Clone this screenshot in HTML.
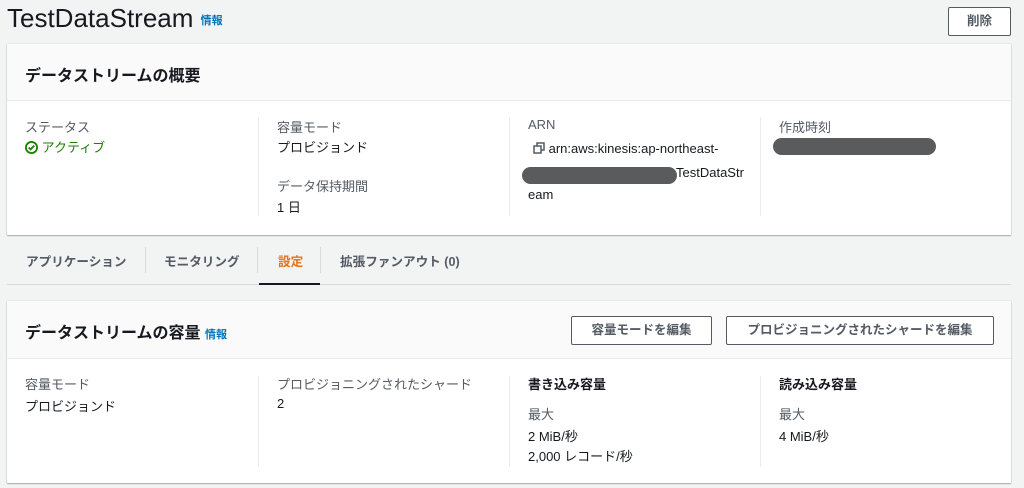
<!DOCTYPE html>
<html><head><meta charset="utf-8"><style>
*{margin:0;padding:0;box-sizing:border-box}
body{width:1024px;height:488px;background:#f2f3f3;font-family:"Liberation Sans","Noto Sans CJK JP",sans-serif;color:#16191f;position:relative;overflow:hidden;font-size:13px}
.abs{position:absolute}
.card{position:absolute;left:7px;width:1004px;background:#fff;box-shadow:0 1px 1px rgba(0,17,26,.3),0 0 1px rgba(0,17,26,.2)}
.hd{background:#fafafa;border-bottom:1px solid #eaeded;position:relative}
.lbl{color:#545b64;font-size:13px}
.val{font-size:13px;color:#16191f}
.div{position:absolute;width:1px;background:#eaeded}
.btn{position:absolute;border:1px solid #545b64;background:#fff;border-radius:2px;font-weight:bold;font-size:12.5px;color:#545b64;text-align:center;line-height:26px}
.info{color:#0073bb;font-size:11px;font-weight:bold}
.red{position:absolute;background:#5a5b5d;border-radius:9px;height:17px}
.tab{position:absolute;top:251px;font-size:12.6px;font-weight:bold;color:#545b64}
</style></head><body>
<div class="abs" style="left:7px;top:3px;font-size:26px;color:#16191f">TestDataStream <span class="info" style="vertical-align:3px">情報</span></div>
<div class="btn" style="left:948px;top:7px;width:63px;height:29px">削除</div>

<div class="card" style="top:44px;height:191px">
 <div class="hd" style="height:57px"><div class="abs" style="left:18px;top:18px;font-size:16px;font-weight:bold">データストリームの概要</div></div>
 <div class="abs lbl" style="left:18px;top:73px">ステータス</div>
 <div class="abs" style="left:18px;top:93px;color:#1d8102">
  <svg width="13" height="13" viewBox="0 0 14 14" style="vertical-align:-2px"><circle cx="7" cy="7" r="6" fill="none" stroke="#1d8102" stroke-width="2"/><path d="M4 7l2 2 4-4" fill="none" stroke="#1d8102" stroke-width="2"/></svg> アクティブ</div>
 <div class="div" style="left:251px;top:73px;height:99px"></div>
 <div class="abs lbl" style="left:270px;top:73px">容量モード</div>
 <div class="abs val" style="left:270px;top:93px">プロビジョンド</div>
 <div class="abs lbl" style="left:270px;top:132px">データ保持期間</div>
 <div class="abs val" style="left:270px;top:153px">1 日</div>
 <div class="div" style="left:502px;top:73px;height:99px"></div>
 <div class="abs lbl" style="left:521px;top:73px">ARN</div>
 <div class="abs val" style="left:526px;top:97px"><svg width="12" height="12" viewBox="0 0 12 12" style="vertical-align:-1px"><rect x="1" y="4" width="7" height="7" fill="none" stroke="#545b64" stroke-width="1.5"/><path d="M4 4V1h7v7H8" fill="none" stroke="#545b64" stroke-width="1.5"/></svg> arn:aws:kinesis:ap-northeast-</div>
 <div class="red" style="left:515px;top:123px;width:155px"></div>
 <div class="abs val" style="left:669px;top:121px">TestDataStr</div>
 <div class="abs val" style="left:521px;top:143px">eam</div>
 <div class="div" style="left:753px;top:73px;height:99px"></div>
 <div class="abs lbl" style="left:772px;top:73px">作成時刻</div>
 <div class="red" style="left:766px;top:94px;width:163px"></div>
</div>

<div class="tab" style="left:26px">アプリケーション</div>
<div class="abs" style="left:145px;top:247px;width:1px;height:26px;background:#d5dbdb"></div>
<div class="tab" style="left:164px">モニタリング</div>
<div class="abs" style="left:257px;top:247px;width:1px;height:26px;background:#d5dbdb"></div>
<div class="tab" style="left:278px;color:#ec7211">設定</div>
<div class="abs" style="left:320px;top:247px;width:1px;height:26px;background:#d5dbdb"></div>
<div class="tab" style="left:340px">拡張ファンアウト (0)</div>
<div class="abs" style="left:7px;top:284px;width:1004px;height:1px;background:#d5dbdb"></div>
<div class="abs" style="left:259px;top:283px;width:61px;height:2px;background:#16191f"></div>

<div class="card" style="top:301px;height:182px">
 <div class="hd" style="height:58px"><div class="abs" style="left:18px;top:18px;font-size:16px;font-weight:bold">データストリームの容量 <span class="info">情報</span></div></div>
 <div class="btn" style="left:564px;top:15px;width:141px;height:29px">容量モードを編集</div>
 <div class="btn" style="left:719px;top:15px;width:268px;height:29px">プロビジョニングされたシャードを編集</div>
 <div class="abs lbl" style="left:18px;top:73px">容量モード</div>
 <div class="abs val" style="left:18px;top:95px">プロビジョンド</div>
 <div class="div" style="left:251px;top:75px;height:91px"></div>
 <div class="abs lbl" style="left:270px;top:73px">プロビジョニングされたシャード</div>
 <div class="abs val" style="left:270px;top:95px">2</div>
 <div class="div" style="left:502px;top:75px;height:91px"></div>
 <div class="abs val" style="left:521px;top:73px;font-weight:bold">書き込み容量</div>
 <div class="abs lbl" style="left:521px;top:103px">最大</div>
 <div class="abs val" style="left:521px;top:125px">2 MiB/秒</div>
 <div class="abs val" style="left:521px;top:145px">2,000 レコード/秒</div>
 <div class="div" style="left:753px;top:75px;height:91px"></div>
 <div class="abs val" style="left:772px;top:73px;font-weight:bold">読み込み容量</div>
 <div class="abs lbl" style="left:772px;top:103px">最大</div>
 <div class="abs val" style="left:772px;top:125px">4 MiB/秒</div>
</div>
</body></html>
